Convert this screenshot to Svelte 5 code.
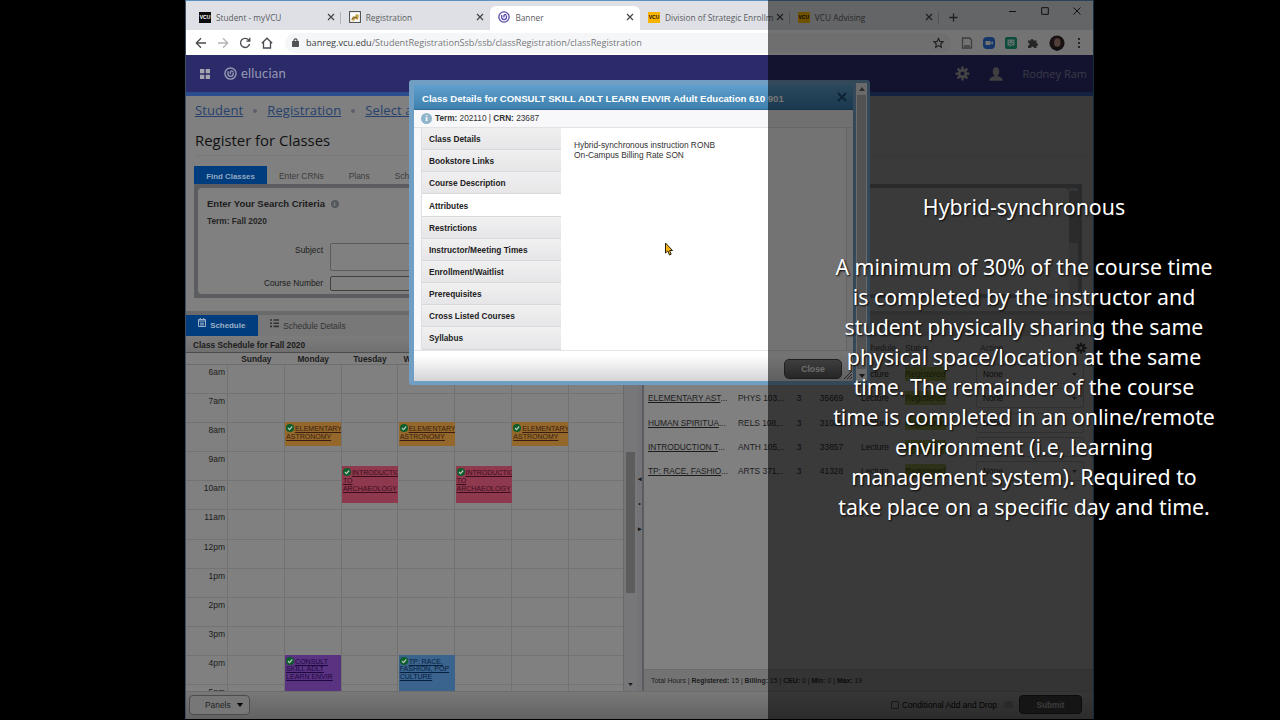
<script>
    // --- DATA ---
    const browserTabs = [
        { title: 'Student - myVCU', icon: 'black' },
        { title: 'Registration', icon: 'ram' },
        { title: 'Banner', icon: 'banner', active: true },
        { title: 'Division of Strategic Enrollm', icon: 'gold' },
        { title: 'VCU Advising', icon: 'gold' }
    ];

    const sections = [
        'Class Details', 'Bookstore Links', 'Course Description', 'Attributes', 'Restrictions',
        'Instructor/Meeting Times', 'Enrollment/Waitlist', 'Prerequisites', 'Cross Listed Courses', 'Syllabus'
    ];
    let activeSection = $state('Attributes');
    let dialogOpen = $state(true);

    const days = ['Sunday', 'Monday', 'Tuesday', 'Wednesday', 'Thursday', 'Friday', 'Saturday'];
    const hours = ['6am', '7am', '8am', '9am', '10am', '11am', '12pm', '1pm', '2pm', '3pm', '4pm', '5pm'];

    // day = column, start and length in hours from 6am
    const events = [
        { day: 1, start: 1.97, length: 0.84, color: 'orange', lines: ['ELEMENTARY', 'ASTRONOMY'] },
        { day: 3, start: 1.97, length: 0.84, color: 'orange', lines: ['ELEMENTARY', 'ASTRONOMY'] },
        { day: 5, start: 1.97, length: 0.84, color: 'orange', lines: ['ELEMENTARY', 'ASTRONOMY'] },
        { day: 2, start: 3.48, length: 1.27, color: 'red', lines: ['INTRODUCTION', 'TO', 'ARCHAEOLOGY'] },
        { day: 4, start: 3.48, length: 1.27, color: 'red', lines: ['INTRODUCTION', 'TO', 'ARCHAEOLOGY'] },
        { day: 1, start: 9.95, length: 1.3, color: 'purple', lines: ['CONSULT', 'SKILL ADLT', 'LEARN ENVIR'] },
        { day: 3, start: 9.95, length: 1.3, color: 'blue', lines: ['TP: RACE,', 'FASHION, POP', 'CULTURE'] }
    ];
    const COL = 56.8;
    const ROW = 29.1;

    const courses = [
        { title: 'CONSULT SKILL', code: 'ADLT 610,', crn: '23687' },
        { title: 'ELEMENTARY AST', code: 'PHYS 103,', crn: '35669' },
        { title: 'HUMAN SPIRITUA', code: 'RELS 108,', crn: '31085' },
        { title: 'INTRODUCTION T', code: 'ANTH 105,', crn: '33857' },
        { title: 'TP: RACE, FASHIO', code: 'ARTS 371,', crn: '41328' }
    ];

    const caption = [
        'Hybrid-synchronous',
        '',
        'A minimum of 30% of the course time',
        'is completed by the instructor and',
        'student physically sharing the same',
        'physical space/location at the same',
        'time. The remainder of the course',
        'time is completed in an online/remote',
        'environment (i.e, learning',
        'management system). Required to',
        'take place on a specific day and time.'
    ];
</script>

{#snippet swirl(color)}
    <svg class="swirl" viewBox="0 0 14 14" fill="none" stroke={color} stroke-width="1.5">
        <circle cx="7" cy="7" r="6" />
        <path d="M4.300 4.600v2.600a2.800 2.800 0 0 0 5.600 0V5.800M6.900 7.600V5.300a1.500 1.500 0 0 1 2.900 0" />
    </svg>
{/snippet}

{#snippet gear(color, hole, size)}
    <svg width={size} height={size} viewBox="0 0 16 16">
        <g stroke={color} stroke-width="2.4">
            <path d="M8 .6v14.8M.6 8h14.8M2.8 2.8l10.4 10.4M13.2 2.8L2.8 13.2" />
        </g>
        <circle cx="8" cy="8" r="4.8" fill={color} />
        <circle cx="8" cy="8" r="2.2" fill={hole} />
    </svg>
{/snippet}

<div class="stage">
    <div class="window">
        <div class="tabstrip">
            {#each browserTabs as tab}
                <div class="tab" class:active={tab.active}>
                    {#if tab.icon === 'banner'}
                        {@render swirl('#5549b0')}
                    {:else if tab.icon === 'ram'}
                        <svg class="fav" viewBox="0 0 12 12">
                            <rect x=".6" y=".6" width="10.8" height="10.8" fill="#fff" stroke="#444" />
                            <path d="M2 9l2-4 2 1 1-3 3 1-1 5-3-1-1 2z" fill="#c9a54a" />
                            <path d="M3 8l3-2 2 1" stroke="#665a38" fill="none" />
                        </svg>
                    {:else}
                        <span class="vcu {tab.icon}">VCU</span>
                    {/if}
                    <span class="tab-title">{tab.title}</span>
                    <svg class="x" viewBox="0 0 8 8"><path d="M1 1l6 6M7 1L1 7" /></svg>
                </div>
            {/each}
            <svg class="plus" viewBox="0 0 10 10"><path d="M5 .5v9M.5 5h9" /></svg>
            <div class="win-buttons">
                <svg viewBox="0 0 8 8"><path d="M0 4.5h7" /></svg>
                <svg viewBox="0 0 8 8"><path d="M.7.7h6.6v6.6H.7z" /></svg>
                <svg viewBox="0 0 8 8"><path d="M.5.5l7 7M7.5.5l-7 7" /></svg>
            </div>
        </div>

        <div class="toolbar">
            <svg viewBox="0 0 12 12"><path d="M11 6H1.5M6 1.3L1.3 6 6 10.7" /></svg>
            <svg viewBox="0 0 12 12" class="faded"><path d="M1 6h9.5M6 1.3L10.7 6 6 10.7" /></svg>
            <svg viewBox="0 0 12 12"><path d="M10 3.4A4.6 4.6 0 1 0 10.6 7M10.8.8v3.4H7.4" /></svg>
            <svg viewBox="0 0 12 12"><path d="M.8 6.3L6 1.2l5.2 5.1M2.5 5v6h7V5" /></svg>
            <div class="address">
                <svg class="lock" viewBox="0 0 8 10">
                    <rect x=".8" y="4" width="6.4" height="5.4" fill="#555" />
                    <path d="M2.2 4V2.6a1.8 1.8 0 0 1 3.6 0V4" />
                </svg>
                <span><b>banreg.vcu.edu</b>/StudentRegistrationSsb/ssb/classRegistration/classRegistration</span>
                <svg class="star" viewBox="0 0 12 12"><path d="M6 1l1.5 3.3 3.5.4-2.6 2.4.7 3.5L6 8.8l-3.1 1.8.7-3.5L1 4.7l3.5-.4z" /></svg>
            </div>
            <div class="extensions">
                <svg viewBox="0 0 12 12"><path d="M1.5 1h7l2 2v8h-9zM3 9h6" stroke="#888" /></svg>
                <svg viewBox="0 0 12 12"><rect width="12" height="12" rx="4" fill="#2d78e6" stroke="none" /><path d="M2.500 4h5v4h-5zM8 5.500l2-1v3l-2-1z" fill="#fff" stroke="none" /></svg>
                <svg viewBox="0 0 12 12"><rect width="12" height="12" rx="2" fill="#19a884" stroke="none" /><path d="M2.500 2.500h7v6h-3l-2 1.500V8.500h-2z" fill="#d8f5ec" stroke="none" /><path d="M4.200 4v1M7.800 4v1M4 6.400q2 1.500 4 0" stroke="#19a884" stroke-width="1" /></svg>
                <svg viewBox="0 0 12 12"><path d="M1 3.500h2.500a1.500 1.500 0 1 1 3 0H9.500v2.500a1.500 1.500 0 1 1 0 3V11H7a1.500 1.500 0 0 0-3 0H1V8.500a1.500 1.500 0 0 0 0-3z" fill="#555" stroke="none" /></svg>
                <svg class="avatar" viewBox="0 0 16 16"><circle cx="8" cy="8" r="7.600" fill="#38282a" stroke="none" /><ellipse cx="8.300" cy="7.500" rx="3.200" ry="4.300" fill="#b98c7e" stroke="none" /><path d="M4 14q4-4 8 0l-4 2z" fill="#222" stroke="none" /></svg>
                <svg class="dots" viewBox="0 0 4 12"><path d="M1 1h2v2H1zM1 5h2v2H1zM1 9h2v2H1z" fill="#555" stroke="none" /></svg>
            </div>
        </div>

        <header>
            <svg class="apps" viewBox="0 0 10 10"><path d="M0 0h4.300v4.300H0zM5.700 0H10v4.300H5.700zM0 5.700h4.300V10H0zM5.700 5.700H10V10H5.700z" /></svg>
            {@render swirl('#9899b4')}
            <span class="brand">ellucian</span>
            <div class="user">
                {@render gear('#9a9a9a', '#2a2b68', 15)}
                <svg width="14" height="14" viewBox="0 0 14 14" fill="#8c8c92"><ellipse cx="7" cy="4.500" rx="3.200" ry="4.200" /><path d="M5.500 7h3v2.200q5.200.6 5.200 4.500H.3q0-3.900 5.200-4.500z" /></svg>
                <span>Rodney Ram</span>
            </div>
        </header>

        <main>
            <nav class="crumbs">
                <a href="#student">Student</a><i></i><a href="#registration">Registration</a><i></i><a href="#term">Select a Term</a>
            </nav>
            <h1>Register for Classes</h1>

            <div class="search-tabs">
                <span class="on">Find Classes</span>
                <span>Enter CRNs</span>
                <span>Plans</span>
                <span>Schedule and Options</span>
            </div>
            <section class="search">
                <div class="criteria">
                    <h2>Enter Your Search Criteria <em>i</em></h2>
                    <p>Term: Fall 2020</p>
                    <div class="field tall"><label for="subject">Subject</label><input id="subject" /></div>
                    <div class="field"><label for="number">Course Number</label><input id="number" /></div>
                </div>
                <div class="search-scroll"><span></span></div>
            </section>

            <div class="panels">
                <section class="schedule">
                    <div class="panel-tabs">
                        <span class="on">
                            <svg width="8" height="9" viewBox="0 0 8 9"><path d="M.5 1.500h7v7h-7zM.5 3h7M2.300 0v2M5.700 0v2M2 5.200h4M2 6.900h4" /></svg>
                            Schedule
                        </span>
                        <span>
                            <svg width="9" height="9" viewBox="0 0 9 9"><path d="M0 1h2M0 4.200h2M0 7.400h2M3.500 1H9M3.500 4.200H9M3.500 7.400H9" stroke-width="1.600" /></svg>
                            Schedule Details
                        </span>
                    </div>
                    <div class="caption-row">Class Schedule for Fall 2020</div>
                    <div class="calendar">
                        <div class="cal-main">
                            <div class="days">
                                <span></span>
                                {#each days as day}<b>{day}</b>{/each}
                            </div>
                            <div class="grid">
                                {#each hours as hour}
                                    <div class="hour">
                                        <span>{hour}</span>
                                        {#each days as _}<i></i>{/each}
                                    </div>
                                {/each}
                                {#each events as ev}
                                    <div
                                        class="event {ev.color}"
                                        style="left: {42.3 + ev.day * COL}px; top: {ev.start * ROW}px; height: {ev.length * ROW - 0.5}px">
                                        <svg viewBox="0 0 8 8"><circle cx="4" cy="4" r="4" fill="#0b5d2a" /><path d="M2 4l1.500 1.600L6.200 2.500" stroke="#b9c9bd" stroke-width="1.200" fill="none" /></svg>{#each ev.lines as line}<u>{line}</u><br />{/each}
                                    </div>
                                {/each}
                            </div>
                        </div>
                        <div class="cal-scroll">
                            <span></span>
                            <svg width="5" height="3" viewBox="0 0 6 4"><path d="M0 0h6L3 4z" fill="#1c1c1c" /></svg>
                        </div>
                    </div>
                </section>

                <div class="splitter"><b>◂</b><b>•</b><b>▸</b></div>

                <section class="summary">
                    <div class="summary-title">Summary</div>
                    <div class="course head">
                        <span>Title</span><span>Details</span><span>Hours</span><span>CRN</span><span>Schedule</span><span>Status</span>
                        <span class="action">Action</span>
                        {@render gear('#262626', '#808080', 12)}
                    </div>
                    {#each courses as c}
                        <div class="course">
                            <span><u>{c.title}</u>...</span>
                            <span>{c.code}..</span>
                            <span>3</span>
                            <span>{c.crn}</span>
                            <span>Lecture</span>
                            <span><mark>Registered</mark></span>
                            <div class="select">None<svg width="5" height="3" viewBox="0 0 6 4"><path d="M0 0h6L3 4z" fill="#333" /></svg></div>
                        </div>
                    {/each}
                    <div class="totals">
                        Total Hours | <b>Registered:</b> 15 | <b>Billing:</b> 15 | <b>CEU:</b> 0 | <b>Min:</b> 0 | <b>Max:</b> 19
                    </div>
                </section>
            </div>

            <footer>
                <button class="panels-btn">Panels <svg width="6" height="4" viewBox="0 0 6 4"><path d="M0 0h6L3 4z" /></svg></button>
                <div class="submit">
                    <span class="check"></span>
                    <span>Conditional Add and Drop</span>
                    <i></i>
                    <button>Submit</button>
                </div>
            </footer>
        </main>
    </div>

    {#if dialogOpen}
        <div class="dialog">
            <div class="dialog-main">
                <div class="dialog-title">
                    <span>Class Details for CONSULT SKILL ADLT LEARN ENVIR Adult Education 610 901</span>
                    <svg viewBox="0 0 10 10"><path d="M1 1l8 8M9 1L1 9" /></svg>
                </div>
                <div class="info"><em>i</em><span><b>Term:</b> 202110 | <b>CRN:</b> 23687</span></div>
                <div class="dialog-body">
                    <div class="side">
                        {#each sections as s}
                            <button class:on={s === activeSection} onclick={() => (activeSection = s)}>{s}</button>
                        {/each}
                    </div>
                    <div class="detail">
                        Hybrid-synchronous instruction RONB<br />
                        On-Campus Billing Rate SON
                    </div>
                </div>
                <div class="dialog-foot">
                    <button onclick={() => (dialogOpen = false)}>Close</button>
                    <svg viewBox="0 0 8 8"><path d="M0 8l8-8M3 8l5-5M6 8l2-2" /></svg>
                </div>
            </div>
            <div class="dialog-scroll">
                <svg width="6" height="4" viewBox="0 0 6 4"><path d="M0 4h6L3 0z" fill="#666" /></svg>
                <span></span>
                <svg width="6" height="4" viewBox="0 0 6 4"><path d="M0 0h6L3 4z" fill="#333" /></svg>
            </div>
        </div>
    {/if}

    <svg class="cursor" viewBox="0 0 9 14"><path d="M1 1v10l2.300-2 1.700 4 1.700-.8-1.600-3.700H8z" /></svg>

    <div class="shade">
        {#each caption as line}
            <p>{line}</p>
        {/each}
    </div>
</div>

<style>
    :global(body) { background: #000; margin: 0; overflow: hidden; }

    .stage {
        position: relative;
        width: 1280px;
        height: 720px;
        background: #000;
        overflow: hidden;
        font-family: "Liberation Sans", Arial, sans-serif;
    }
    .stage * { box-sizing: border-box; }
    button { font-family: inherit; }

    .window {
        width: 909px;
        height: 719px;
        margin-left: 185px;
        border-top: 1px solid #5c92c2;
        border-left: 1px solid #3b5068;
        border-right: 1px solid #34608a;
        display: flex;
        flex-direction: column;
    }

    /* browser chrome */
    .tabstrip {
        height: 29px;
        flex: none;
        display: flex;
        align-items: flex-end;
        background: #dee0e5;
        padding-left: 5px;
    }
    .tab {
        width: 149.7px;
        height: 24px;
        flex: none;
        display: flex;
        align-items: center;
        padding: 0 6px 2px 8px;
        font: 8.3px "Open Sans", sans-serif;
        color: #5a5b60;
        background: linear-gradient(#b3b5ba, #b3b5ba) right 6px / 1px 12px no-repeat;
    }
    .tab.active { background: #fff; border-radius: 6px 6px 0 0; }
    .tab:has(+ .active) { background: none; }
    .tab-title { flex: 1; min-width: 0; margin-left: 5px; white-space: nowrap; }
    .x { width: 8px; height: 8px; fill: none; stroke: #444; stroke-width: 1.2; flex: none; }
    .fav { width: 12px; height: 12px; flex: none; }
    .tab .swirl { width: 12px; height: 12px; }
    .vcu {
        width: 12px;
        height: 11px;
        flex: none;
        background: #0c0c0c;
        color: #fff;
        font: bold 5px/11px "Liberation Sans", sans-serif;
        text-align: center;
    }
    .vcu.gold { background: #f8b300; color: #111; }
    .plus { width: 9px; height: 9px; margin: 0 0 8px 10px; stroke: #444; stroke-width: 1.4; }
    .win-buttons { display: flex; gap: 24px; margin: 0 12px 15px auto; }
    .win-buttons svg { width: 8px; height: 8px; fill: none; stroke: #222; stroke-width: 1; }

    .toolbar {
        height: 25px;
        flex: none;
        display: flex;
        align-items: center;
        gap: 10px;
        padding: 0 12px 0 9px;
        background: #fff;
    }
    .toolbar svg { width: 12px; height: 12px; flex: none; fill: none; stroke: #4a4b4f; stroke-width: 1.3; }
    .toolbar .faded { stroke: #b5b5b8; }
    .address {
        width: 666px;
        height: 20px;
        margin-left: 2px;
        padding: 0 7px;
        border-radius: 10px;
        background: #f5f6f8;
        display: flex;
        align-items: center;
        font: 9.15px "Open Sans", sans-serif;
        color: #75767a;
    }
    .address b { font-weight: normal; color: #3c3d40; }
    .toolbar .lock { width: 7px; height: 9px; margin-right: 7px; }
    .toolbar .star { margin-left: auto; width: 11px; }
    .extensions { display: flex; align-items: center; gap: 10px; margin-left: auto; }
    .toolbar .avatar { width: 16px; height: 16px; }
    .toolbar .dots { width: 4px; margin-left: 2px; }

    header {
        height: 41px;
        flex: none;
        display: flex;
        align-items: center;
        padding: 0 6px 0 14px;
        background: #2a2b68;
        border-bottom: 4px solid #2b4d8e;
        color: #9899b4;
    }
    .apps { width: 10px; height: 10px; fill: #a6a6b0; margin-right: 14px; }
    .swirl { width: 13px; height: 13px; flex: none; }
    .brand { font: 13px "Lato", sans-serif; margin-left: 4px; letter-spacing: 0.2px; padding-bottom: 2px; }
    .user { margin-left: auto; display: flex; align-items: center; gap: 19px; font: 11px "Open Sans", sans-serif; }
    .user span { color: #8082a0; }

    /* page */
    main { flex: 1; min-height: 0; display: flex; flex-direction: column; background: #808080; color: #1c1c1c; }
    .crumbs { height: 28px; flex: none; display: flex; align-items: center; padding-left: 9px; font: 13px "Open Sans", sans-serif; }
    .crumbs a { color: #27406d; letter-spacing: 0.1px; }
    .crumbs i { width: 4px; height: 4px; margin: 2px 10px 0; border-radius: 50%; background: #5d6068; }
    h1 { font: 14.9px/32px "Open Sans", sans-serif; height: 32px; flex: none; margin: 0 0 0 9px; color: #101010; border-bottom: 1px solid #797979; }

    .search-tabs { height: 28px; padding: 10px 0 0 8px; flex: none; display: flex; font-size: 8.4px; line-height: 21px; color: #3c3c3c; }
    .search-tabs span { height: 18px; margin: 0 36px 0 -11px; white-space: nowrap; }
    .search-tabs .on { width: 73px; margin: 0 23px 0 0; text-align: center; background: #003d7e; color: #93a9c2; font-weight: bold; font-size: 7.9px; }
    .search {
        height: 114px;
        flex: none;
        margin: 0 11px 0 8px;
        border: 4px solid #5c5d60;
        background: #5c5d60;
        display: flex;
    }
    .criteria { flex: 1; background: #808080; border-radius: 4px; padding: 8px 9px 7px; font-size: 9px; }
    h2 { margin: 0; font-size: 9.5px; line-height: 16px; }
    h2 em { display: inline-block; width: 8px; height: 8px; margin-left: 3px; border-radius: 50%; background: #55585c; color: #888; font: bold 7px/8px "Liberation Serif", serif; text-align: center; vertical-align: 1px; }
    .criteria p { margin: 0; font-size: 8.3px; line-height: 18px; font-weight: bold; color: #252525; }
    .field { display: flex; line-height: 14px; margin-top: 5px; }
    .field.tall { margin-top: 13px; }
    .field label { width: 123px; padding-right: 7px; text-align: right; font-size: 8.4px; line-height: 15px; }
    .field input { width: 420px; height: 15px; background: #808080; border: 1px solid #404040; border-radius: 2px; }
    .field.tall input { height: 28px; border-color: #5c5c5c; }
    .search-scroll { width: 9px; background: #777; padding-top: 3px; }
    .search-scroll span { display: block; height: 52px; background: #606060; }

    .panels { flex: 1; min-height: 0; margin-top: 13px; display: flex; border-top: 4px solid #6a6a6b; }
    .schedule { width: 451px; flex: none; display: flex; flex-direction: column; }
    .panel-tabs { height: 21px; flex: none; display: flex; font-size: 8.3px; line-height: 22px; color: #333; background: #787878; }
    .panel-tabs span { padding-left: 12px; white-space: nowrap; }
    .panel-tabs .on { width: 72px; background: #003d7e; color: #9db1c8; font-weight: bold; font-size: 7.9px; }
    .panel-tabs svg { fill: none; stroke: currentColor; margin: 0 2px 1px 0; }
    .caption-row { height: 17px; flex: none; padding-left: 7px; font-size: 8.3px; line-height: 18px; font-weight: bold; background: linear-gradient(#7c7c7c, #707070); border-bottom: 1px solid #4c4c4c; }
    .calendar { flex: 1; min-height: 0; display: flex; }
    .cal-main { width: 438px; display: flex; flex-direction: column; overflow: hidden; border-right: 1px solid #6a6a6a; }
    .days { height: 12px; flex: none; display: flex; font-size: 8.4px; line-height: 13px; text-align: center; border-bottom: 1px solid #6d6d6d; }
    .days span { width: 42px; flex: none; }
    .days b { width: 56.8px; flex: none; }
    .grid { position: relative; flex: 1; min-height: 0; overflow: hidden; }
    .hour { height: 29.1px; display: flex; border-bottom: 1px solid #737373; }
    .hour span { width: 42px; flex: none; padding-right: 2px; text-align: right; font-size: 8.5px; line-height: 15px; border-right: 1px solid #717171; }
    .hour i { width: 56.8px; flex: none; border-right: 1px solid #717171; }
    .event {
        position: absolute;
        width: 56px;
        overflow: hidden;
        font-size: 7px;
        line-height: 7.8px;
        white-space: nowrap;
        padding: 2px 0 0 1px;
        color: #3a1c12;
    }
    .event svg { width: 8px; height: 8px; margin: 0 1px -1px 0; }
    .orange { background: #94682a; }
    .red { background: #8e394d; color: #3d0c1e; }
    .purple { background: #593382; color: #1d0840; }
    .blue { background: #3a638d; color: #07203f; }
    .cal-scroll { width: 13px; display: flex; flex-direction: column; align-items: center; background: #777779; }
    .cal-scroll span { width: 9px; height: 141px; margin-top: 99px; background: #5d5d5d; }
    .cal-scroll svg { margin: auto 0 5px; }

    .splitter { width: 7px; flex: none; display: flex; flex-direction: column; align-items: center; justify-content: center; gap: 14px; background: #747478; border-right: 2px solid #5c5c60; font-size: 7px; line-height: 11px; }
    .summary { flex: 1; min-width: 0; display: flex; flex-direction: column; }
    .summary-title { height: 21px; flex: none; padding-left: 6px; font-size: 9px; line-height: 21px; background: #747474; }
    .course { height: 24.3px; flex: none; display: grid; grid-template-columns: 90px 51px 20px 45px 51px 71px 108px; align-items: center; padding-left: 4px; font-size: 8.4px; white-space: nowrap; }
    .course span:nth-child(3) { text-align: center; }
    .course span:nth-child(4) { text-align: center; }
    .course span:nth-child(5) { padding-left: 7px; }
    .course.head { height: 26px; padding-bottom: 3px; grid-template-columns: 90px 51px 20px 45px 51px 71px 99px 12px; color: #333; }
    .course.head .action { padding-left: 4px; }
    .course span:nth-child(1) { letter-spacing: -0.05px; }
    mark { background: #656d33; color: #2b3a10; font-style: italic; padding: 2px 0; }
    .select { height: 20px; display: flex; align-items: center; justify-content: space-between; padding: 0 6px; border: 1px solid #6b6b6b; border-radius: 2px; }
    .totals { margin-top: auto; height: 22px; flex: none; padding-left: 7px; font-size: 6.9px; line-height: 22px; background: #737373; border-top: 1px solid #6b6b6b; white-space: nowrap; }

    footer { height: 28px; flex: none; display: flex; align-items: center; padding: 0 11px 2px 3px; background: linear-gradient(#787878, #626262); border-top: 1px solid #6c6c6c; }
    .panels-btn { width: 61px; height: 20px; padding: 0 0 0 9px; font-size: 8.4px; color: #222; background: #777; border: 1px solid #4c4c4c; border-radius: 4px; }
    .panels-btn svg { margin: 0 0 1px 4px; }
    .submit { margin-left: auto; display: flex; align-items: center; font-size: 8.35px; color: #060606; }
    .check { width: 8px; height: 8px; margin-right: 3px; border: 1px solid #333; border-radius: 1px; }
    .submit i { width: 9px; height: 7px; margin-left: 7px; border-radius: 3px; background: #5c5c5c; }
    .submit button { width: 63px; height: 19px; margin-left: 6px; font-size: 8.3px; font-weight: bold; color: #858585; background: #303030; border: 1px solid #1c1c1c; border-radius: 4px; }

    /* class details */
    .dialog {
        position: absolute;
        left: 409px;
        top: 80px;
        width: 461px;
        height: 305px;
        padding: 5px 3px 4px 5px;
        display: flex;
        background: #719fc4;
        border-radius: 3px;
    }
    .dialog-main { width: 439px; display: flex; flex-direction: column; background: #fff; }
    .dialog-title {
        height: 25px;
        flex: none;
        display: flex;
        align-items: center;
        justify-content: space-between;
        padding: 2px 6px 0 8px;
        background: linear-gradient(#5f9fcd, #3d80ae);
        border-bottom: 1px solid #2f6d9a;
        color: #fff;
        font-size: 9.6px;
        font-weight: bold;
        white-space: nowrap;
    }
    .dialog-title svg { width: 10px; height: 10px; stroke: #1c4d75; stroke-width: 2; margin-bottom: 2px; }
    .info { height: 18px; flex: none; display: flex; align-items: center; padding: 0 0 1px 7px; background: #f8f8fa; font-size: 8.25px; color: #333; border-bottom: 1px solid #e3e3e6; }
    .info em { width: 11px; height: 11px; margin-right: 3px; border-radius: 50%; background: #8fb5c8; color: #fff; font: bold 9px/11px "Liberation Serif", serif; text-align: center; }
    .dialog-body { height: 221.5px; flex: none; display: flex; padding: 0 6px 0 7px; background: #f8f8fa; }
    .side { width: 140px; display: flex; flex-direction: column; border-left: 1px solid #e0e0e0; }
    .side button { flex: 1; padding: 1px 7px 0; border: 0; border-bottom: 1px solid #d9d9dc; background: linear-gradient(#f0f0f1, #e6e6e8); text-align: left; font-size: 8.3px; font-weight: bold; color: #222; }
    .side button.on { background: #fff; }
    .detail { flex: 1; padding: 12px 13px; background: #fff; font-size: 8.35px; line-height: 10px; color: #333; border-right: 1px solid #ddd; }
    .dialog-foot { flex: 1; display: flex; align-items: flex-end; justify-content: flex-end; padding: 0 1px 2px 0; background: linear-gradient(#fff 15%, #d4d4d8); border-top: 1px solid #e5e5e5; }
    .dialog-foot button { width: 58px; height: 20px; margin-right: 2px; color: #eee; font-size: 8.7px; font-weight: bold; border: 1px solid #444; border-radius: 5px; background: linear-gradient(#8a8a8a, #555); }
    .dialog-foot svg { width: 8px; height: 8px; stroke: #555; stroke-width: 1; }
    .dialog-scroll { width: 11px; margin: -2px 0 0 3px; padding: 4px 0 3px; display: flex; flex-direction: column; align-items: center; background: #ececec; }
    .dialog-scroll span { flex: 1; width: 9px; background: #b5b5b5; margin: 4px 0 5px; }

    .cursor { position: absolute; left: 664px; top: 242px; width: 10px; height: 14px; fill: #f7b512; stroke: #2c2205; stroke-width: 1; }

    .shade {
        position: absolute;
        left: 768px;
        top: 0;
        width: 512px;
        height: 720px;
        padding-top: 191.5px;
        background: rgba(0, 0, 0, 0.55);
        color: #fff;
        font: 21.3px/30.1px "Noto Sans", sans-serif;
        text-align: center;
        text-shadow: 1px 1px 2px #000;
    }
    .shade p { height: 30.1px; margin: 0; white-space: nowrap; }
</style>
